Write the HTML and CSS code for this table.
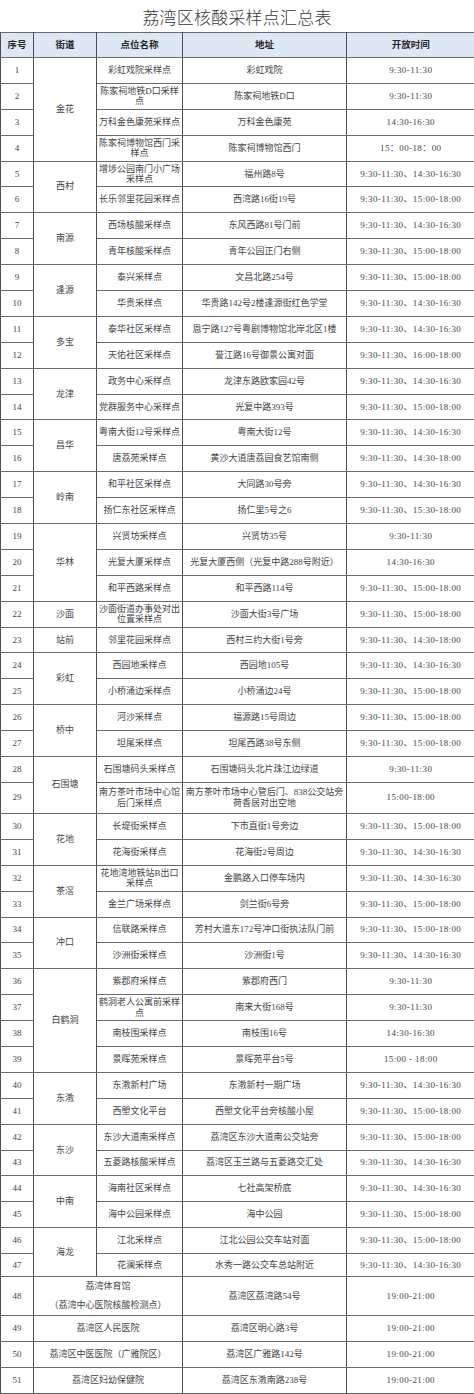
FILE: index.html
```html
<!DOCTYPE html>
<html lang="zh-CN">
<head>
<meta charset="utf-8">
<title>荔湾区核酸采样点汇总表</title>
<link rel="stylesheet" href="styles.css">
</head>
<body>
<div class="title">荔湾区核酸采样点汇总表</div>
<table class="sheet">
<colgroup>
<col class="w-no"><col class="w-street"><col class="w-name"><col class="w-addr"><col class="w-time">
</colgroup>
<thead>
<tr class="head"><th>序号</th><th>街道</th><th>点位名称</th><th>地址</th><th>开放时间</th></tr>
</thead>
<tbody>
<tr><td>1</td><td rowspan="4">金花</td><td>彩虹戏院采样点</td><td>彩虹戏院</td><td>9:30-11:30</td></tr>
<tr><td>2</td><td class="wrap">陈家祠地铁D口采样<br>点</td><td>陈家祠地铁D口</td><td>9:30-11:30</td></tr>
<tr><td>3</td><td>万科金色康苑采样点</td><td>万科金色康苑</td><td>14:30-16:30</td></tr>
<tr><td>4</td><td class="wrap">陈家祠博物馆西门采<br>样点</td><td>陈家祠博物馆西门</td><td>15：00-18：00</td></tr>
<tr><td>5</td><td rowspan="2">西村</td><td class="wrap">增埗公园南门小广场<br>采样点</td><td>福州路8号</td><td>9:30-11:30、14:30-16:30</td></tr>
<tr><td>6</td><td>长乐邻里花园采样点</td><td>西湾路16街19号</td><td>9:30-11:30、15:00-18:00</td></tr>
<tr><td>7</td><td rowspan="2">南源</td><td>西场核酸采样点</td><td>东风西路81号门前</td><td>9:30-11:30、14:30-16:30</td></tr>
<tr><td>8</td><td>青年核酸采样点</td><td>青年公园正门右侧</td><td>9:30-11:30、15:00-18:00</td></tr>
<tr><td>9</td><td rowspan="2">逢源</td><td>泰兴采样点</td><td>文昌北路254号</td><td>9:30-11:30、15:00-18:00</td></tr>
<tr><td>10</td><td>华贵采样点</td><td>华贵路142号2楼逢源街红色学堂</td><td>9:30-11:30、14:30-16:30</td></tr>
<tr><td>11</td><td rowspan="2">多宝</td><td>泰华社区采样点</td><td>恩宁路127号粤剧博物馆北岸北区1楼</td><td>9:30-11:30、14:30-16:30</td></tr>
<tr><td>12</td><td>天佑社区采样点</td><td>誉江路16号御景公寓对面</td><td>9:30-11:30、16:00-18:00</td></tr>
<tr><td>13</td><td rowspan="2">龙津</td><td>政务中心采样点</td><td>龙津东路欧家园42号</td><td>9:30-11:30、14:30-16:30</td></tr>
<tr><td>14</td><td>党群服务中心采样点</td><td>光复中路393号</td><td>9:30-11:30、15:00-18:00</td></tr>
<tr><td>15</td><td rowspan="2">昌华</td><td>粤南大街12号采样点</td><td>粤南大街12号</td><td>9:30-11:30、14:30-16:30</td></tr>
<tr><td>16</td><td>唐荔苑采样点</td><td>黄沙大道唐荔园食艺馆南侧</td><td>9:30-11:30、14:30-18:00</td></tr>
<tr><td>17</td><td rowspan="2">岭南</td><td>和平社区采样点</td><td>大同路30号旁</td><td>9:30-11:30、14:30-16:30</td></tr>
<tr><td>18</td><td>扬仁东社区采样点</td><td>扬仁里5号之6</td><td>9:30-11:30、15:30-18:00</td></tr>
<tr><td>19</td><td rowspan="3">华林</td><td>兴贤坊采样点</td><td>兴贤坊35号</td><td>9:30-11:30</td></tr>
<tr><td>20</td><td>光复大厦采样点</td><td>光复大厦西侧（光复中路288号附近）</td><td>14:30-16:30</td></tr>
<tr><td>21</td><td>和平西路采样点</td><td>和平西路114号</td><td>9:30-11:30、15:00-18:00</td></tr>
<tr><td>22</td><td>沙面</td><td class="wrap">沙面街道办事处对出<br>位置采样点</td><td>沙面大街3号广场</td><td>9:30-11:30、15:00-18:00</td></tr>
<tr><td>23</td><td>站前</td><td>邻里花园采样点</td><td>西村三约大街1号旁</td><td>9:30-11:30、14:30-18:00</td></tr>
<tr><td>24</td><td rowspan="2">彩虹</td><td>西园地采样点</td><td>西园地105号</td><td>9:30-11:30、14:30-16:30</td></tr>
<tr><td>25</td><td>小桥涌边采样点</td><td>小桥涌边24号</td><td>9:30-11:30、15:00-18:00</td></tr>
<tr><td>26</td><td rowspan="2">桥中</td><td>河沙采样点</td><td>福源路15号周边</td><td>9:30-11:30、15:00-18:00</td></tr>
<tr><td>27</td><td>坦尾采样点</td><td>坦尾西路38号东侧</td><td>9:30-11:30、15:00-18:00</td></tr>
<tr><td>28</td><td rowspan="2">石围塘</td><td>石围塘码头采样点</td><td>石围塘码头北片珠江边绿道</td><td>9:30-11:30</td></tr>
<tr class="tall"><td>29</td><td class="wrap">南方茶叶市场中心馆<br>后门采样点</td><td class="wrap">南方茶叶市场中心管后门、838公交站旁<br>荷香居对出空地</td><td>15:00-18:00</td></tr>
<tr><td>30</td><td rowspan="2">花地</td><td>长堤街采样点</td><td>下市直街1号旁边</td><td>9:30-11:30、15:00-18:00</td></tr>
<tr><td>31</td><td>花海街采样点</td><td>花海街2号周边</td><td>9:30-11:30、14:30-16:30</td></tr>
<tr><td>32</td><td rowspan="2">茶滘</td><td class="wrap">花地湾地铁站B出口<br>采样点</td><td>金鹏路入口停车场内</td><td>9:30-11:30、14:30-16:30</td></tr>
<tr><td>33</td><td>金兰广场采样点</td><td>剑兰街6号旁</td><td>9:30-11:30、15:00-18:00</td></tr>
<tr><td>34</td><td rowspan="2">冲口</td><td>信联路采样点</td><td>芳村大道东172号冲口街执法队门前</td><td>9:30-11:30、15:00-18:00</td></tr>
<tr><td>35</td><td>沙洲街采样点</td><td>沙洲街1号</td><td>9:30-11:30、14:30-16:30</td></tr>
<tr><td>36</td><td rowspan="4">白鹤洞</td><td>紫郡府采样点</td><td>紫郡府西门</td><td>9:30-11:30</td></tr>
<tr><td>37</td><td class="wrap">鹤洞老人公寓前采样<br>点</td><td>南来大街168号</td><td>9:30-11:30</td></tr>
<tr><td>38</td><td>南枝围采样点</td><td>南枝围16号</td><td>14:30-16:30</td></tr>
<tr><td>39</td><td>景晖苑采样点</td><td>景晖苑平台5号</td><td>15:00 - 18:00</td></tr>
<tr><td>40</td><td rowspan="2">东漖</td><td>东漖新村广场</td><td>东漖新村一期广场</td><td>9:30-11:30、14:30-16:30</td></tr>
<tr><td>41</td><td>西塱文化平台</td><td>西塱文化平台旁核酸小屋</td><td>9:30-11:30、15:00-18:00</td></tr>
<tr><td>42</td><td rowspan="2">东沙</td><td>东沙大道南采样点</td><td>荔湾区东沙大道南公交站旁</td><td>9:30-11:30、15:00-18:00</td></tr>
<tr><td>43</td><td>五菱路核酸采样点</td><td>荔湾区玉兰路与五菱路交汇处</td><td>9:30-11:30、14:30-16:30</td></tr>
<tr><td>44</td><td rowspan="2">中南</td><td>海南社区采样点</td><td>七社高架桥底</td><td>9:30-11:30、14:30-16:30</td></tr>
<tr><td>45</td><td>海中公园采样点</td><td>海中公园</td><td>9:30-11:30、15:00-18:00</td></tr>
<tr><td>46</td><td rowspan="2">海龙</td><td>江北采样点</td><td>江北公园公交车站对面</td><td>9:30-11:30、15:00-18:00</td></tr>
<tr class="short"><td>47</td><td>花澜采样点</td><td>水秀一路公交车总站附近</td><td>9:30-11:30、14:30-16:30</td></tr>
<tr class="xl"><td>48</td><td colspan="2" class="wide">荔湾体育馆<br>（荔湾中心医院核酸检测点）</td><td>荔湾区荔湾路54号</td><td>19:00-21:00</td></tr>
<tr class="even"><td>49</td><td colspan="2">荔湾区人民医院</td><td>荔湾区明心路3号</td><td>19:00-21:00</td></tr>
<tr class="even"><td>50</td><td colspan="2">荔湾区中医医院（广雅院区）</td><td>荔湾区广雅路142号</td><td>19:00-21:00</td></tr>
<tr class="even"><td>51</td><td colspan="2">荔湾区妇幼保健院</td><td>荔湾区东漖南路238号</td><td>19:00-21:00</td></tr>
</tbody>
</table>
</body>
</html>
```
FILE: styles.css
```css
html, body {
  margin: 0;
  padding: 0;
  background: #ffffff;
  overflow: hidden;
}
body {
  width: 474px;
  font-family: "Liberation Serif", "Noto Sans CJK SC", serif;
  color: #444444;
}
.title {
  height: 30px;
  padding-top: 2px;
  line-height: 30px;
  text-align: center;
  font-family: "Noto Sans CJK SC", sans-serif;
  font-size: 17px;
  font-weight: 300;
  color: #383838;
  letter-spacing: 0.2px;
}
.sheet {
  width: 474px;
  border-collapse: collapse;
  table-layout: fixed;
  font-size: 9px;
}
.w-no { width: 33px; }
.w-street { width: 63px; }
.w-name { width: 86px; }
.w-addr { width: 164px; }
.w-time { width: 128px; }
.sheet th,
.sheet td {
  padding: 0 1px;
  text-align: center;
  vertical-align: middle;
  white-space: nowrap;
  line-height: 11px;
  border-left: 1px solid #4e4e4e;
  border-right: 1px solid #4e4e4e;
  border-top: 1px solid #6a6a6a;
  border-bottom: 1px solid #6a6a6a;
  overflow: hidden;
}
.sheet th:last-child,
.sheet td:last-child {
  border-right: none;
}
.sheet td:last-child {
  letter-spacing: 0.4px;
}
.sheet tr {
  height: 25.9px;
}
.sheet .head {
  height: 25px;
}
.sheet th {
  background: #dce8f4;
  color: #262626;
  font-weight: 700;
  font-size: 9.5px;
  letter-spacing: 0;
}
.sheet .wrap {
  line-height: 10.5px;
}
.sheet .tall { height: 31px; }
.sheet .short { height: 23px; }
.sheet .xl { height: 38px; }
.sheet .even { height: 26px; }
.sheet .wide {
  line-height: 19px;
}
```
